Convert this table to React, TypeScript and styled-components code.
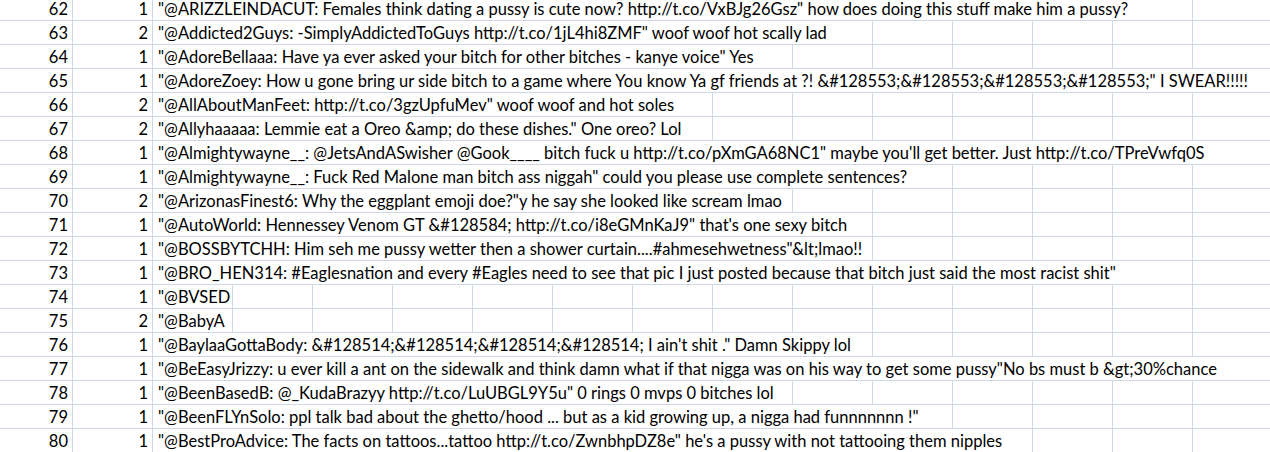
import React from "react";
import styled, { createGlobalStyle } from "styled-components";

const GRID = "#d0d7e5";

const Global = createGlobalStyle`
  html, body { margin: 0; padding: 0; background: #ffffff; overflow: hidden; }
  body { width: 1270px; height: 452px; }
`;

const Sheet = styled.div`
  margin-top: -3px;
  width: 1270px;
  overflow: hidden;
  display: flex;
  flex-direction: column;
  font-family: "Lato", "Liberation Sans", sans-serif;
  font-size: 16.5px;
  color: #000000;
`;

const Row = styled.div`
  display: flex;
  height: 24px;
`;

const Cell = styled.div<{ $width: number; $align?: "left" | "right" }>`
  box-sizing: border-box;
  flex: 0 0 ${(p) => p.$width}px;
  width: ${(p) => p.$width}px;
  height: 24px;
  border-right: 1px solid ${GRID};
  border-bottom: 1px solid ${GRID};
  display: flex;
  align-items: flex-end;
  justify-content: ${(p) => (p.$align === "right" ? "flex-end" : "flex-start")};
  padding: 0 4px 2px 4px;
  line-height: 18px;
  white-space: nowrap;
`;

const TextCell = styled(Cell)`
  padding-left: 5px;
  overflow: visible;
`;

type R = { n: number; v: number; t: string; span: number };

const rows: R[] = [
  { n: 62, v: 1, span: 13, t: '"@ARIZZLEINDACUT: Females think dating a pussy is cute now? http://t.co/VxBJg26Gsz" how does doing this stuff make him a pussy?' },
  { n: 63, v: 2, span: 9, t: '"@Addicted2Guys: -SimplyAddictedToGuys http://t.co/1jL4hi8ZMF" woof woof hot scally lad' },
  { n: 64, v: 1, span: 8, t: '"@AdoreBellaaa: Have ya ever asked your bitch for other bitches - kanye voice" Yes' },
  { n: 65, v: 1, span: 14, t: '"@AdoreZoey: How u gone bring ur side bitch to a game where You know Ya gf friends at ?! &#128553;&#128553;&#128553;&#128553;" I SWEAR!!!!!' },
  { n: 66, v: 2, span: 7, t: '"@AllAboutManFeet: http://t.co/3gzUpfuMev" woof woof and hot soles' },
  { n: 67, v: 2, span: 7, t: '"@Allyhaaaaa: Lemmie eat a Oreo &amp; do these dishes." One oreo? Lol' },
  { n: 68, v: 1, span: 14, t: '"@Almightywayne__: @JetsAndASwisher @Gook____ bitch fuck u http://t.co/pXmGA68NC1" maybe you\'ll get better. Just http://t.co/TPreVwfq0S' },
  { n: 69, v: 1, span: 10, t: '"@Almightywayne__: Fuck Red Malone man bitch ass niggah" could you please use complete sentences?' },
  { n: 70, v: 2, span: 8, t: '"@ArizonasFinest6: Why the eggplant emoji doe?"y he say she looked like scream lmao' },
  { n: 71, v: 1, span: 9, t: '"@AutoWorld: Hennessey Venom GT &#128584; http://t.co/i8eGMnKaJ9" that\'s one sexy bitch' },
  { n: 72, v: 1, span: 9, t: '"@BOSSBYTCHH: Him seh me pussy wetter then a shower curtain....#ahmesehwetness"&lt;lmao!!' },
  { n: 73, v: 1, span: 13, t: '"@BRO_HEN314: #Eaglesnation and every #Eagles need to see that pic I just posted because that bitch just said the most racist shit"' },
  { n: 74, v: 1, span: 1, t: '"@BVSED' },
  { n: 75, v: 2, span: 1, t: '"@BabyA' },
  { n: 76, v: 1, span: 9, t: '"@BaylaaGottaBody: &#128514;&#128514;&#128514;&#128514; I ain\'t shit ." Damn Skippy lol' },
  { n: 77, v: 1, span: 14, t: '"@BeEasyJrizzy: u ever kill a ant on the sidewalk and think damn what if that nigga was on his way to get some pussy"No bs must b &gt;30%chance' },
  { n: 78, v: 1, span: 8, t: '"@BeenBasedB: @_KudaBrazyy http://t.co/LuUBGL9Y5u" 0 rings 0 mvps 0 bitches lol' },
  { n: 79, v: 1, span: 10, t: '"@BeenFLYnSolo: ppl talk bad about the ghetto/hood ... but as a kid growing up, a nigga had funnnnnnn !"' },
  { n: 80, v: 1, span: 11, t: '"@BestProAdvice: The facts on tattoos...tattoo http://t.co/ZwnbhpDZ8e" he\'s a pussy with not tattooing them nipples' },
];

const COLS = 15;
const COL_W = 80;

export default function App() {
  return (
    <>
      <Global />
      <Sheet>
        {rows.map((r) => (
          <Row key={r.n}>
            <Cell $width={73} $align="right">{r.n}</Cell>
            <Cell $width={COL_W} $align="right">{r.v}</Cell>
            <TextCell $width={COL_W * r.span}>{r.t}</TextCell>
            {Array.from({ length: COLS - r.span }).map((_, i) => (
              <Cell key={i} $width={COL_W} />
            ))}
          </Row>
        ))}
      </Sheet>
    </>
  );
}
